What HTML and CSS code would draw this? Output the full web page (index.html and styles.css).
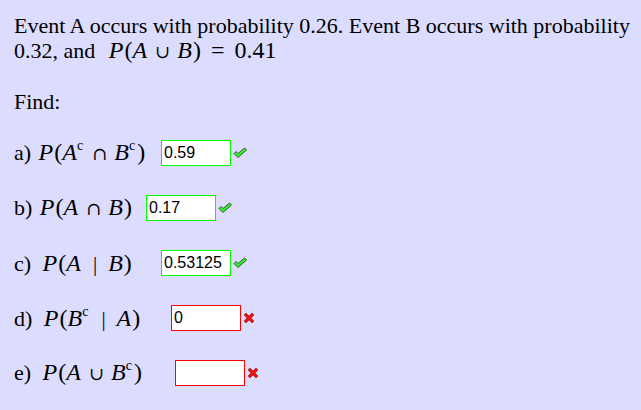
FILE: index.html
```html
<!DOCTYPE html>
<html lang="en">
  <head>
    <meta charset="UTF-8" />
    <title>Probability</title>
    <link rel="stylesheet" href="styles.css">
  </head>
  <body>
    <div class="problem">
      <p class="intro">
        Event A occurs with probability 0.26. Event B occurs with probability<br>
        0.32, and <span class="math lead"><i>P</i>(<i>A</i><span class="op">&cup;</span><i>B</i>)<span class="eq">=</span>0.41</span>
      </p>

      <p class="find">Find:</p>

      <div class="part part-a">
        <span class="label">a) <span class="math"><i>P</i>(<i>A</i><sup>c</sup><span class="op">&cap;</span><i>B</i><sup>c</sup>)</span></span>
        <input type="text" class="answer correct" value="0.59" />
        <span class="mark">
          <svg width="15" height="12" viewBox="0 0 15 12"><path d="M1 6.5 L5 10.5 L13.5 3 L11.5 1 L5 6.5 L3 4.5 Z" fill="#33ee22" stroke="#3a5a3a" stroke-width="1"/></svg>
        </span>
      </div>

      <div class="part part-b">
        <span class="label">b) <span class="math"><i>P</i>(<i>A</i><span class="op">&cap;</span><i>B</i>)</span></span>
        <input type="text" class="answer correct" value="0.17" />
        <span class="mark">
          <svg width="15" height="12" viewBox="0 0 15 12"><path d="M1 6.5 L5 10.5 L13.5 3 L11.5 1 L5 6.5 L3 4.5 Z" fill="#33ee22" stroke="#3a5a3a" stroke-width="1"/></svg>
        </span>
      </div>

      <div class="part part-c">
        <span class="label">c) <span class="math wide"><i>P</i>(<i>A</i><span class="mid">|</span><i>B</i>)</span></span>
        <input type="text" class="answer correct" value="0.53125" />
        <span class="mark">
          <svg width="15" height="12" viewBox="0 0 15 12"><path d="M1 6.5 L5 10.5 L13.5 3 L11.5 1 L5 6.5 L3 4.5 Z" fill="#33ee22" stroke="#3a5a3a" stroke-width="1"/></svg>
        </span>
      </div>

      <div class="part part-d">
        <span class="label">d) <span class="math wide"><i>P</i>(<i>B</i><sup>c</sup><span class="mid">|</span><i>A</i>)</span></span>
        <input type="text" class="answer wrong" value="0" />
        <span class="mark">
          <svg width="12" height="12" viewBox="0 0 12 12"><path d="M1 3 L3 1 L6 4 L9 1 L11 3 L8 6 L11 9 L9 11 L6 8 L3 11 L1 9 L4 6 Z" fill="#ee1111" stroke="#993333" stroke-width="0.8"/></svg>
        </span>
      </div>

      <div class="part part-e">
        <span class="label">e) <span class="math wide"><i>P</i>(<i>A</i><span class="op">&cup;</span><i>B</i><sup>c</sup>)</span></span>
        <input type="text" class="answer wrong" value="" />
        <span class="mark">
          <svg width="12" height="12" viewBox="0 0 12 12"><path d="M1 3 L3 1 L6 4 L9 1 L11 3 L8 6 L11 9 L9 11 L6 8 L3 11 L1 9 L4 6 Z" fill="#ee1111" stroke="#993333" stroke-width="0.8"/></svg>
        </span>
      </div>
    </div>
  </body>
</html>
```

FILE: styles.css
```css
body {
  margin: 0;
  padding: 0;
  background-color: #dcdcff;
  font-family: "Liberation Serif", "Times New Roman", serif;
  font-size: 22px;
  color: #000;
}

.problem {
  padding: 14px 0 0 14px;
}

.intro {
  margin: 0;
  line-height: 24px;
  white-space: nowrap;
}

.math {
  margin-left: 2px;
  font-size: 24px;
}

.math.lead {
  margin-left: 8px;
}

.math i {
  font-style: italic;
  margin-right: 1px;
}

.math sup {
  font-size: 14px;
  vertical-align: 10px;
  line-height: 0;
  margin-left: -1px;
  margin-right: 2px;
}

.op {
  font-family: "DejaVu Serif", serif;
  font-size: 18px;
  margin: 0 7px;
}

.eq {
  margin: 0 10px;
}

.mid {
  font-size: 21px;
  margin: 0 11px;
}

.find {
  margin: 28px 0 0 0;
  line-height: 20px;
}

.part {
  display: flex;
  align-items: center;
  height: 26px;
  line-height: 26px;
  margin-top: 29px;
}

.part-a {
  margin-top: 28px;
}

.label {
  white-space: nowrap;
  flex: 0 0 auto;
}

.part-a .label {
  width: 147px;
}

.part-b .label {
  width: 132px;
}

.part-c .label {
  width: 147px;
}

.part-d .label {
  width: 157px;
}

.part-e .label {
  width: 161px;
}

.wide {
  margin-left: 6px;
}

.answer {
  height: 26px;
  width: 70px;
  box-sizing: border-box;
  padding: 0 2px;
  font-family: "Liberation Sans", Arial, sans-serif;
  font-size: 16px;
  color: #000;
  background: #fff;
  border: 1px solid #00ff00;
  outline: none;
  margin: 0;
}

.answer.wrong {
  border-color: #ff0000;
}

.mark {
  display: flex;
  margin-left: 2px;
}
```
